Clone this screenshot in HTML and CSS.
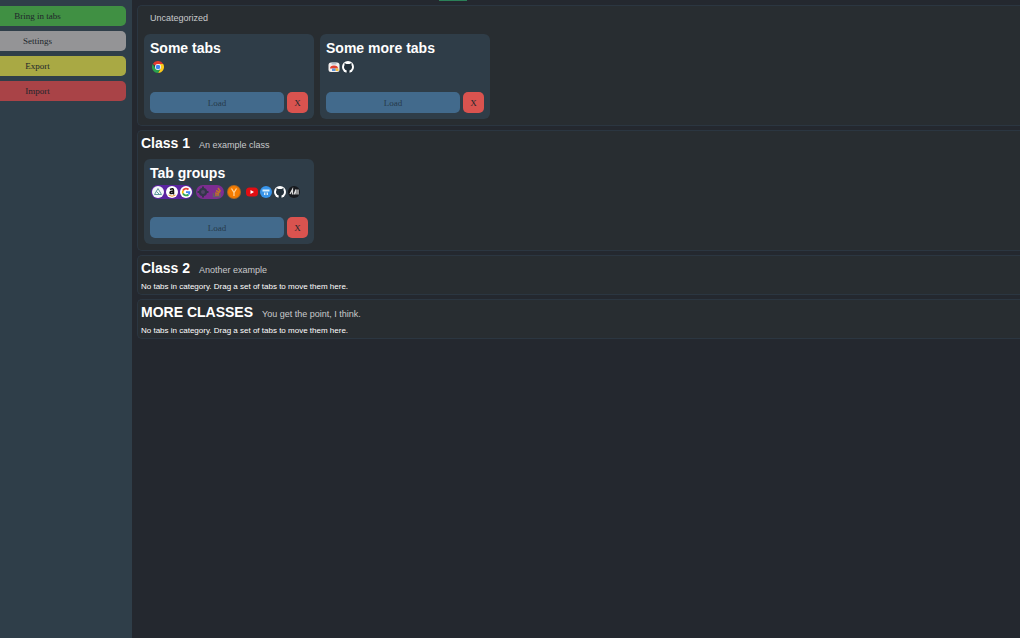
FILE: index.html
```html
<!DOCTYPE html>
<html lang="en">
<head>
  <meta charset="UTF-8" />
  <meta name="viewport" content="width=device-width, initial-scale=1.0"/>
  <title>Tabs</title>
  <link rel="stylesheet" href="styles.css">
</head>
<body>

  <svg class="sprites" aria-hidden="true">
    <symbol id="chrome" viewBox="0 0 24 24">
      <path fill="#e33b2e" d="M12 12 1.6 6A12 12 0 0 1 22.4 6z"/>
      <path fill="#fbc91b" d="M12 12V6h10.4A12 12 0 0 1 12 24l5.2-9z"/>
      <path fill="#2ba24c" d="M1.6 6 6.8 15l5.2 3h3.5L12 24A12 12 0 0 1 1.6 6z"/>
      <circle cx="12" cy="12" r="6" fill="#fff"/>
      <circle cx="12" cy="12" r="4.6" fill="#3f83ee"/>
    </symbol>
    <symbol id="github" viewBox="0 0 24 24">
      <circle cx="12" cy="12" r="12" fill="#fff"/>
      <path fill="#23303a" d="M9 24v-5c-3-1-5-3-5-7 0-2 1-3 1-4V4l4 2h6l4-2v4c0 1 1 2 1 4 0 4-2 6-5 7v5z"/>
      <path fill="none" stroke="#fff" stroke-width="2" d="M3 16c3 0 2 4 6 4"/>
    </symbol>
    <symbol id="store" viewBox="0 0 24 24">
      <rect x="1" y="3" width="22" height="19" rx="5" fill="#f4efed"/>
      <path fill="#b3bfc8" d="M7 3h10v4H7z"/>
      <path fill="#e0402f" d="M4 15a8 6 0 0 1 16 0z"/>
      <path fill="#f5bd3b" d="M14 15h7v5h-6z"/>
      <path fill="#5a93dc" d="M8 15h7v5H8z"/>
    </symbol>
    <symbol id="drive" viewBox="0 0 24 24">
      <circle cx="12" cy="12" r="12" fill="#f3f5f8"/>
      <path fill="none" stroke="#5c9a99" stroke-width="2" d="M12 5 5 17h14zM9 11l6 6"/>
    </symbol>
    <symbol id="amazon" viewBox="0 0 24 24">
      <circle cx="12" cy="12" r="12" fill="#fff"/>
      <path fill="none" stroke="#111" stroke-width="3" d="M8 7q7-4 7 2v8M15 10c-9 0-8 6-4 5q3-1 4-3"/>
      <path fill="none" stroke="#f29a2e" stroke-width="2" d="M5 18q7 5 14 0"/>
    </symbol>
    <symbol id="google" viewBox="0 0 24 24">
      <circle cx="12" cy="12" r="12" fill="#fff"/>
      <g fill="none" stroke-width="3.5">
        <path stroke="#e94335" d="M6 9a7 7 0 0 1 11-2"/>
        <path stroke="#fbbc05" d="M6 15a7 7 0 0 1 0-6"/>
        <path stroke="#34a853" d="M6 15a7 7 0 0 0 11 2"/>
        <path stroke="#4285f4" d="M12 12h7q0 3-2 5"/>
      </g>
    </symbol>
    <symbol id="gear" viewBox="0 0 24 24">
      <circle cx="12" cy="12" r="8" fill="#54456a"/>
      <circle cx="12" cy="12" r="6" fill="none" stroke="#33364a" stroke-width="4"/>
      <path stroke="#33364a" stroke-width="4" d="M12 1v5M12 18v5M1 12h5M18 12h5"/>
    </symbol>
    <symbol id="stack" viewBox="0 0 24 24">
      <path fill="none" stroke="#655e68" stroke-width="3" d="M5 14v7h13v-7"/>
      <path stroke="#bb702f" stroke-width="3" d="M8 18h8M8 14l8 1M10 9l8 4M14 4l5 7"/>
    </symbol>
    <symbol id="ycomb" viewBox="0 0 24 24">
      <circle cx="12" cy="12" r="12" fill="#f57c00"/>
      <path fill="none" stroke="#ffd49a" stroke-width="2.5" d="m7 5 5 8 5-8M12 13v7"/>
    </symbol>
    <symbol id="youtube" viewBox="0 0 24 24">
      <rect y="3" width="24" height="18" rx="7" fill="#e20d12"/>
      <path fill="#fff" d="m9 8 7 4-7 4z"/>
    </symbol>
    <symbol id="bot" viewBox="0 0 24 24">
      <circle cx="12" cy="12" r="12" fill="#3794ea"/>
      <path fill="#d8efff" d="M5 7h14v4H5zM8 13h8v5H8z"/>
      <path stroke="#2774bd" stroke-width="2" d="M12 13v5"/>
    </symbol>
    <symbol id="slashes" viewBox="0 0 24 24">
      <circle cx="12" cy="12" r="12" fill="#17191d"/>
      <path fill="none" stroke="#dcdcdc" stroke-width="2.5" d="m4 16 5-9v10M12 17l4-10v10M20 7v10"/>
    </symbol>
  </svg>

  <div class="top-tab"></div>

  <div class="page">
    <nav class="sidebar">
      <button type="button" class="side-button green">Bring in tabs</button>
      <button type="button" class="side-button gray">Settings</button>
      <button type="button" class="side-button yellow">Export</button>
      <button type="button" class="side-button red">Import</button>
    </nav>

    <main class="content">
      <section class="category">
        <p class="description uncategorized">Uncategorized</p>
        <div class="cards">
          <div class="card">
            <h3>Some tabs</h3>
            <div class="icons">
              <svg><use href="#chrome"/></svg>
            </div>
            <div class="actions">
              <button type="button" class="load">Load</button>
              <button type="button" class="delete">X</button>
            </div>
          </div>
          <div class="card">
            <h3>Some more tabs</h3>
            <div class="icons">
              <svg><use href="#store"/></svg>
              <svg><use href="#github"/></svg>
            </div>
            <div class="actions">
              <button type="button" class="load">Load</button>
              <button type="button" class="delete">X</button>
            </div>
          </div>
        </div>
      </section>

      <section class="category">
        <div class="heading">
          <h2>Class 1</h2>
          <p class="description">An example class</p>
        </div>
        <div class="cards">
          <div class="card">
            <h3>Tab groups</h3>
            <div class="icons">
              <span class="group purple">
                <svg><use href="#drive"/></svg>
                <svg><use href="#amazon"/></svg>
                <svg><use href="#google"/></svg>
              </span>
              <span class="group pink">
                <svg><use href="#gear"/></svg>
                <svg><use href="#stack"/></svg>
              </span>
              <span class="group orange">
                <svg><use href="#ycomb"/></svg>
              </span>
              <svg><use href="#youtube"/></svg>
              <svg><use href="#bot"/></svg>
              <svg><use href="#github"/></svg>
              <svg><use href="#slashes"/></svg>
            </div>
            <div class="actions">
              <button type="button" class="load">Load</button>
              <button type="button" class="delete">X</button>
            </div>
          </div>
        </div>
      </section>

      <section class="category">
        <div class="heading">
          <h2>Class 2</h2>
          <p class="description">Another example</p>
        </div>
        <p class="empty">No tabs in category. Drag a set of tabs to move them here.</p>
      </section>

      <section class="category">
        <div class="heading">
          <h2>MORE CLASSES</h2>
          <p class="description">You get the point, I think.</p>
        </div>
        <p class="empty">No tabs in category. Drag a set of tabs to move them here.</p>
      </section>
    </main>
  </div>

</body>
</html>
```

FILE: styles.css
```css
* {
  box-sizing: border-box;
}

body {
  margin: 0;
  background-color: #24282f;
  color: #fff;
  font-family: "Liberation Sans", Arial, sans-serif;
}

h2, h3, p {
  margin: 0;
}

button {
  height: 21px;
  padding: 0;
  border: none;
  border-radius: 5px;
  color: #20262c;
  font-family: "Liberation Serif", "Times New Roman", serif;
  font-size: 9px;
  cursor: pointer;
}

.sprites {
  position: absolute;
  width: 0;
  height: 0;
}

.top-tab {
  position: absolute;
  top: 0;
  left: 43%;
  width: 28px;
  height: 1px;
  background-color: #2b8058;
}

.page {
  display: flex;
  min-height: 100vh;
}

.sidebar {
  display: flex;
  flex-direction: column;
  gap: 5px;
  flex: 0 0 132px;
  padding: 6px 6px 6px 0;
  background-color: #2f3e49;
}

.side-button {
  height: 20px;
  padding-right: 51px;
  border-radius: 0 5px 5px 0;
}

.green {
  background-color: #409043;
}

.gray {
  background-color: #949496;
}

.yellow {
  background-color: #a9a944;
}

.red {
  background-color: #a94347;
}

.content {
  display: flex;
  flex-direction: column;
  gap: 4px;
  flex: 1;
  min-width: 0;
  padding: 5px 0 5px 5px;
}

.category {
  padding: 4px 3px 2px;
  border: 1px solid #2b3641;
  border-right: none;
  border-radius: 5px 0 0 5px;
  background-color: #282d31;
}

.heading {
  display: flex;
  align-items: baseline;
  gap: 9px;
  height: 16px;
}

h2, h3 {
  font-size: 14px;
  line-height: 16px;
}

.description {
  color: #c8cacc;
  font-size: 9px;
  line-height: 16px;
}

.uncategorized {
  padding-left: 9px;
}

.empty {
  padding-top: 6px;
  font-size: 8px;
  line-height: 10px;
}

.cards {
  display: flex;
  flex-wrap: wrap;
  gap: 6px;
  padding: 8px 3px 4px;
}

.card {
  width: 170px;
  padding: 6px;
  border-radius: 6px;
  background-color: #2f3d48;
}

.icons {
  display: flex;
  align-items: center;
  gap: 2px;
  height: 16px;
  margin: 3px 0 17px;
  padding-left: 2px;
}

.icons svg {
  flex: none;
  width: 12px;
  height: 12px;
}

.group {
  display: flex;
  gap: 2px;
  margin: 0 2px 0 -1px;
  padding: 1px;
  border-radius: 7px;
}

.purple {
  background-color: #5b24a0;
}

.pink {
  background-color: #7d2d91;
}

.orange {
  margin-right: 3px;
  background-color: #b66a1c;
}

.actions {
  display: flex;
  gap: 3px;
}

.load {
  flex: 0 0 134px;
  background-color: #426a8c;
  color: #263a4b;
}

.delete {
  flex: 0 0 21px;
  background-color: #d9534f;
}
```
